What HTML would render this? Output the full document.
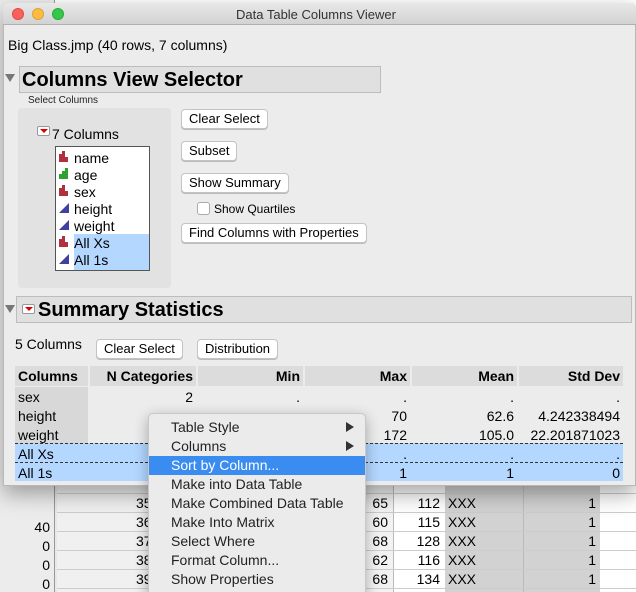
<!DOCTYPE html>
<html><head><style>
*{margin:0;padding:0;box-sizing:border-box}
html,body{width:636px;height:592px;overflow:hidden}
body{position:relative;background:#e8e8e8;font-family:"Liberation Sans",Arial,sans-serif;color:#000}
.a{position:absolute}
.t{position:absolute;white-space:nowrap;font-size:14px;line-height:16px}
.btn{position:absolute;background:#fff;border:1px solid #c4c4c4;border-radius:4px;font-size:13px;line-height:18px;padding:0 7px;box-shadow:0 1px 0 #bbb;white-space:nowrap}
.r{text-align:right}
.hd{position:absolute;top:366px;height:20px;background:#dcdcdc;font-weight:bold;font-size:14px;line-height:20px;padding:0 3px}
.mi{position:absolute;left:0;width:216px;height:19px;line-height:19px;font-size:14px;padding-left:22px;color:#222}
</style></head><body>
<!-- background data table -->
<div class="a" style="left:0;top:0;width:636px;height:8px;background:#fff"></div>
<div class="a" style="left:0;top:0;width:55px;height:592px;background:#ececec;border-right:1px solid #999"></div>
<div class="a" style="left:57px;top:485px;width:579px;height:107px;background:#fff"></div>
<div class="a" style="left:57px;top:485px;width:91px;height:107px;background:#f0f0f0"></div>
<div class="a" style="left:366px;top:485px;width:27px;height:107px;background:#f2f2f2"></div>
<div class="a" style="left:445px;top:485px;width:155px;height:107px;background:#d2d2d2"></div>
<div class="a" style="left:523px;top:485px;width:1px;height:107px;background:#bbb"></div>
<div class="a" style="left:393px;top:485px;width:1px;height:107px;background:#bbb"></div>
<div class="a" style="left:57px;top:485px;width:579px;height:107px;background:repeating-linear-gradient(180deg,transparent 0 8px,#ccc 8px 9px,transparent 9px 19px)"></div>
<div class="t r" style="left:10px;top:519px;width:40px">40</div>
<div class="t r" style="left:10px;top:538px;width:40px">0</div>
<div class="t r" style="left:10px;top:557px;width:40px">0</div>
<div class="t r" style="left:10px;top:576px;width:40px">0</div>
<div class="t" style="left:136px;top:495px">35</div><div class="t" style="left:136px;top:514px">36</div><div class="t" style="left:136px;top:533px">37</div><div class="t" style="left:136px;top:552px">38</div><div class="t" style="left:136px;top:571px">39</div>
<div class="t r" style="left:360px;top:495px;width:28px">65</div><div class="t r" style="left:360px;top:514px;width:28px">60</div><div class="t r" style="left:360px;top:533px;width:28px">68</div><div class="t r" style="left:360px;top:552px;width:28px">62</div><div class="t r" style="left:360px;top:571px;width:28px">68</div>
<div class="t r" style="left:400px;top:495px;width:40px">112</div><div class="t r" style="left:400px;top:514px;width:40px">115</div><div class="t r" style="left:400px;top:533px;width:40px">128</div><div class="t r" style="left:400px;top:552px;width:40px">116</div><div class="t r" style="left:400px;top:571px;width:40px">134</div>
<div class="t" style="left:448px;top:495px">XXX</div><div class="t" style="left:448px;top:514px">XXX</div><div class="t" style="left:448px;top:533px">XXX</div><div class="t" style="left:448px;top:552px">XXX</div><div class="t" style="left:448px;top:571px">XXX</div>
<div class="t r" style="left:560px;top:495px;width:36px">1</div><div class="t r" style="left:560px;top:514px;width:36px">1</div><div class="t r" style="left:560px;top:533px;width:36px">1</div><div class="t r" style="left:560px;top:552px;width:36px">1</div><div class="t r" style="left:560px;top:571px;width:36px">1</div>

<!-- window -->
<div class="a" style="left:3px;top:3px;width:633px;height:483px;background:#ececec;border:1px solid #b8b8b8;border-radius:5px 5px 0 0;box-shadow:0 8px 22px rgba(0,0,0,.35)"></div>
<div class="a" style="left:3px;top:3px;width:633px;height:22px;background:linear-gradient(#e8e8e8,#d3d3d3);border-bottom:1px solid #b0b0b0;border-radius:5px 5px 0 0"></div>
<div class="a" style="left:12px;top:8px;width:12px;height:12px;border-radius:50%;background:#fc605c;border:1px solid #de4a45"></div>
<div class="a" style="left:32px;top:8px;width:12px;height:12px;border-radius:50%;background:#fdbc40;border:1px solid #dea234"></div>
<div class="a" style="left:52px;top:8px;width:12px;height:12px;border-radius:50%;background:#34c84a;border:1px solid #27aa35"></div>
<div class="t" style="left:236px;top:7px;font-size:13px;color:#333">Data Table Columns Viewer</div>

<div class="t" style="left:8px;top:37px">Big Class.jmp (40 rows, 7 columns)</div>
<div class="a" style="left:5px;top:74px;width:0;height:0;border-left:5px solid transparent;border-right:5px solid transparent;border-top:8px solid #777"></div>
<div class="a" style="left:19px;top:66px;width:362px;height:27px;background:#e0e0e0;border:1px solid #bdbdbd"></div>
<div class="t" style="left:22px;top:68px;font-size:20px;line-height:24px;font-weight:bold">Columns View Selector</div>
<div class="t" style="left:28px;top:95px;font-size:10px;line-height:12px;color:#222">Select Columns</div>
<div class="a" style="left:18px;top:108px;width:153px;height:180px;background:#e2e2e2;border-radius:3px"></div>
<div class="a" style="left:37px;top:126px;width:13px;height:10px;background:#fff;border:1px solid #999;border-radius:2px"></div>
<div class="a" style="left:40px;top:129px;width:0;height:0;border-left:4px solid transparent;border-right:4px solid transparent;border-top:4px solid #d00"></div>
<div class="t" style="left:52px;top:126px">7 Columns</div>
<div class="a" style="left:55px;top:146px;width:95px;height:125px;background:#fff;border:1px solid #555"></div>
<div class="a" style="left:74px;top:234px;width:75px;height:36px;background:#b3d7ff"></div>
<svg class="a" style="left:58px;top:150px" width="14" height="118">
<g fill="#b03040"><rect x="1" y="4" width="3" height="8"/><rect x="4" y="1" width="3" height="11"/><rect x="7" y="7" width="3" height="5"/></g>
<g fill="#30a030" transform="translate(0,17)"><rect x="1" y="7" width="3" height="5"/><rect x="4" y="4" width="3" height="8"/><rect x="7" y="1" width="3" height="11"/></g>
<g fill="#b03040" transform="translate(0,34)"><rect x="1" y="4" width="3" height="8"/><rect x="4" y="1" width="3" height="11"/><rect x="7" y="7" width="3" height="5"/></g>
<polygon points="1,63 11,53 11,63" fill="#4040a0"/>
<polygon points="1,80 11,70 11,80" fill="#4040a0"/>
<g fill="#b03040" transform="translate(0,85)"><rect x="1" y="4" width="3" height="8"/><rect x="4" y="1" width="3" height="11"/><rect x="7" y="7" width="3" height="5"/></g>
<polygon points="1,114 11,104 11,114" fill="#4040a0"/>
</svg>
<div class="t" style="left:74px;top:150px">name</div>
<div class="t" style="left:74px;top:167px">age</div>
<div class="t" style="left:74px;top:184px">sex</div>
<div class="t" style="left:74px;top:201px">height</div>
<div class="t" style="left:74px;top:218px">weight</div>
<div class="t" style="left:74px;top:235px">All Xs</div>
<div class="t" style="left:74px;top:252px">All 1s</div>

<div class="btn" style="left:181px;top:109px">Clear Select</div>
<div class="btn" style="left:181px;top:141px">Subset</div>
<div class="btn" style="left:181px;top:173px">Show Summary</div>
<div class="a" style="left:197px;top:202px;width:13px;height:13px;background:#fff;border:1px solid #aaa;border-radius:3px"></div>
<div class="t" style="left:214px;top:201px;font-size:12px">Show Quartiles</div>
<div class="btn" style="left:181px;top:223px">Find Columns with Properties</div>

<div class="a" style="left:5px;top:305px;width:0;height:0;border-left:5px solid transparent;border-right:5px solid transparent;border-top:8px solid #777"></div>
<div class="a" style="left:16px;top:296px;width:616px;height:27px;background:#e0e0e0;border:1px solid #bdbdbd"></div>
<div class="a" style="left:22px;top:304px;width:13px;height:10px;background:#fff;border:1px solid #999;border-radius:2px"></div>
<div class="a" style="left:25px;top:307px;width:0;height:0;border-left:4px solid transparent;border-right:4px solid transparent;border-top:4px solid #d00"></div>
<div class="t" style="left:38px;top:298px;font-size:20px;line-height:24px;font-weight:bold">Summary Statistics</div>
<div class="t" style="left:15px;top:336px">5 Columns</div>
<div class="btn" style="left:96px;top:339px">Clear Select</div>
<div class="btn" style="left:197px;top:339px">Distribution</div>

<div class="hd" style="left:15px;width:73px">Columns</div>
<div class="hd r" style="left:90px;width:106px">N Categories</div>
<div class="hd r" style="left:198px;width:105px">Min</div>
<div class="hd r" style="left:305px;width:105px">Max</div>
<div class="hd r" style="left:412px;width:105px">Mean</div>
<div class="hd r" style="left:519px;width:104px">Std Dev</div>
<div class="a" style="left:15px;top:387px;width:73px;height:56px;background:#d8d8d8"></div>
<div class="a" style="left:15px;top:443px;width:608px;height:38px;background:#b3d7ff;border-top:1px dashed #333"></div>
<div class="a" style="left:15px;top:462px;width:608px;height:0;border-top:1px dashed #333"></div>
<div class="t" style="left:18px;top:389px">sex</div>
<div class="t" style="left:18px;top:408px">height</div>
<div class="t" style="left:18px;top:427px">weight</div>
<div class="t" style="left:18px;top:446px">All Xs</div>
<div class="t" style="left:18px;top:465px">All 1s</div>
<div class="t r" style="left:150px;top:389px;width:43px">2</div>
<div class="t r" style="left:250px;top:389px;width:50px">.</div>
<div class="t r" style="left:350px;top:389px;width:57px">.</div><div class="t r" style="left:450px;top:389px;width:64px">.</div><div class="t r" style="left:560px;top:389px;width:60px">.</div>
<div class="t r" style="left:350px;top:408px;width:57px">70</div><div class="t r" style="left:450px;top:408px;width:64px">62.6</div><div class="t r" style="left:520px;top:408px;width:100px">4.242338494</div>
<div class="t r" style="left:350px;top:427px;width:57px">172</div><div class="t r" style="left:450px;top:427px;width:64px">105.0</div><div class="t r" style="left:520px;top:427px;width:100px">22.201871023</div>
<div class="t r" style="left:450px;top:446px;width:64px">.</div><div class="t r" style="left:560px;top:446px;width:60px">.</div><div class="t r" style="left:350px;top:446px;width:57px">.</div>
<div class="t r" style="left:350px;top:465px;width:57px">1</div><div class="t r" style="left:450px;top:465px;width:64px">1</div><div class="t r" style="left:560px;top:465px;width:60px">0</div>

<!-- context menu -->
<div class="a" style="left:148px;top:413px;width:218px;height:185px;background:#ebebeb;border:1px solid #c8c8c8;border-radius:5px;box-shadow:0 4px 14px rgba(0,0,0,.3)">
<div class="mi" style="top:4px">Table Style</div>
<div class="mi" style="top:23px">Columns</div>
<div class="mi" style="top:42px;background:#3a8cf0;color:#fff">Sort by Column...</div>
<div class="mi" style="top:61px">Make into Data Table</div>
<div class="mi" style="top:80px">Make Combined Data Table</div>
<div class="mi" style="top:99px">Make Into Matrix</div>
<div class="mi" style="top:118px">Select Where</div>
<div class="mi" style="top:137px">Format Column...</div>
<div class="mi" style="top:156px">Show Properties</div>
<div class="a" style="left:197px;top:8px;width:0;height:0;border-top:5px solid transparent;border-bottom:5px solid transparent;border-left:8px solid #333"></div>
<div class="a" style="left:197px;top:27px;width:0;height:0;border-top:5px solid transparent;border-bottom:5px solid transparent;border-left:8px solid #333"></div>
</div>
</body></html>
